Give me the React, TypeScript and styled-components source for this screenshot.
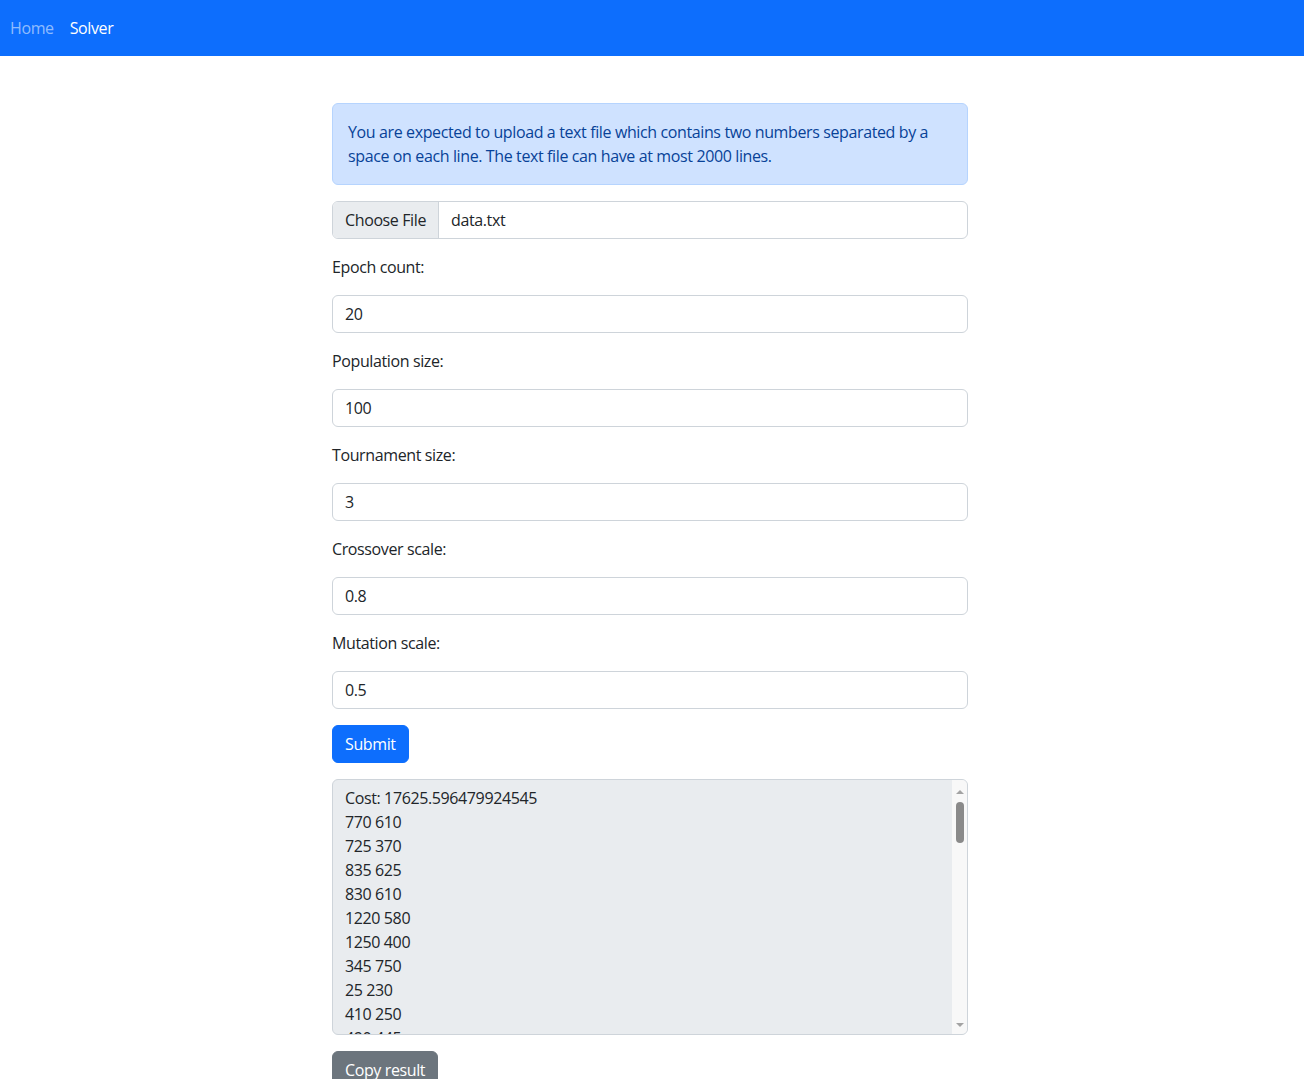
import React from "react";
import styled, { createGlobalStyle } from "styled-components";

const GlobalStyle = createGlobalStyle`
  html, body {
    margin: 0;
    padding: 0;
    background: #fff;
  }
  body {
    font-family: "Open Sans", "Noto Sans", sans-serif;
    font-size: 16px;
    line-height: 24px;
    color: #212529;
  }
  * {
    box-sizing: border-box;
  }
`;

const font = `font-family: "Open Sans", "Noto Sans", sans-serif; letter-spacing: -0.38px;`;

const NavBar = styled.nav`
  height: 56px;
  background-color: #0d6efd;
  display: flex;
  align-items: center;
  padding: 0 2px;
`;

const NavLink = styled.a<{ $active?: boolean }>`
  ${font}
  padding: 8px;
  color: ${(p) => (p.$active ? "#fff" : "rgba(255, 255, 255, 0.55)")};
  text-decoration: none;
`;

const Page = styled.main`
  width: 636px;
  margin: 47px auto 0;
  position: relative;
  left: -2px;
  ${font}
`;

const Alert = styled.div`
  padding: 16px 15px;
  border: 1px solid #b6d4fe;
  border-radius: 6px;
  background-color: #cfe2ff;
  color: #084298;
  margin-bottom: 16px;
`;

const FileInput = styled.div`
  display: flex;
  height: 38px;
  border: 1px solid #ced4da;
  border-radius: 6px;
  overflow: hidden;
  margin-bottom: 16px;
`;

const FileButton = styled.span`
  width: 106px;
  padding: 6px 12px;
  background-color: #e9ecef;
  border-right: 1px solid #ced4da;
  white-space: nowrap;
`;

const FileName = styled.span`
  padding: 6px 12px;
`;

const Label = styled.label`
  display: block;
  margin-bottom: 16px;
`;

const Input = styled.div`
  height: 38px;
  padding: 6px 12px;
  border: 1px solid #ced4da;
  border-radius: 6px;
  background: #fff;
  margin-bottom: 16px;
`;

const Button = styled.button<{ $variant: "primary" | "secondary" }>`
  ${font}
  display: block;
  font-size: 16px;
  line-height: 24px;
  padding: 6px 12px;
  border: 1px solid ${(p) => (p.$variant === "primary" ? "#0d6efd" : "#6c757d")};
  border-radius: 6px;
  background-color: ${(p) => (p.$variant === "primary" ? "#0d6efd" : "#6c757d")};
  color: #fff;
  margin-bottom: 16px;
`;

const ResultBox = styled.div`
  display: flex;
  height: 256px;
  border: 1px solid #ced4da;
  border-radius: 6px;
  background-color: #e9ecef;
  overflow: hidden;
  margin-bottom: 16px;
`;

const ResultText = styled.div`
  flex: 1;
  padding: 6px 12px;
  white-space: pre;
  overflow: hidden;
`;

const ScrollTrack = styled.div`
  width: 15px;
  display: flex;
  flex-direction: column;
  align-items: center;
  background-color: #f8f8f8;
  padding: 10px 0 7px;
`;

const Arrow = styled.span<{ $down?: boolean }>`
  width: 0;
  height: 0;
  border-left: 4px solid transparent;
  border-right: 4px solid transparent;
  ${(p) =>
    p.$down
      ? "border-top: 4px solid #a3a3a3; margin-top: auto;"
      : "border-bottom: 4px solid #a3a3a3;"}
`;

const Thumb = styled.span`
  width: 8px;
  height: 41px;
  margin-top: 8px;
  border-radius: 4px;
  background-color: #8a8a8a;
`;

const fields = [
  { label: "Epoch count:", value: "20" },
  { label: "Population size:", value: "100" },
  { label: "Tournament size:", value: "3" },
  { label: "Crossover scale:", value: "0.8" },
  { label: "Mutation scale:", value: "0.5" },
];

const result = [
  "Cost: 17625.596479924545",
  "770 610",
  "725 370",
  "835 625",
  "830 610",
  "1220 580",
  "1250 400",
  "345 750",
  "25 230",
  "410 250",
  "490 445",
].join("\n");

export default function App() {
  return (
    <>
      <GlobalStyle />
      <NavBar>
        <NavLink href="#">Home</NavLink>
        <NavLink href="#" $active>
          Solver
        </NavLink>
      </NavBar>
      <Page>
        <Alert>
          You are expected to upload a text file which contains two numbers
          separated by a space on each line. The text file can have at most
          2000 lines.
        </Alert>
        <FileInput>
          <FileButton>Choose File</FileButton>
          <FileName>data.txt</FileName>
        </FileInput>
        {fields.map((f) => (
          <React.Fragment key={f.label}>
            <Label>{f.label}</Label>
            <Input>{f.value}</Input>
          </React.Fragment>
        ))}
        <Button $variant="primary">Submit</Button>
        <ResultBox>
          <ResultText>{result}</ResultText>
          <ScrollTrack>
            <Arrow />
            <Thumb />
            <Arrow $down />
          </ScrollTrack>
        </ResultBox>
        <Button $variant="secondary">Copy result</Button>
      </Page>
    </>
  );
}
